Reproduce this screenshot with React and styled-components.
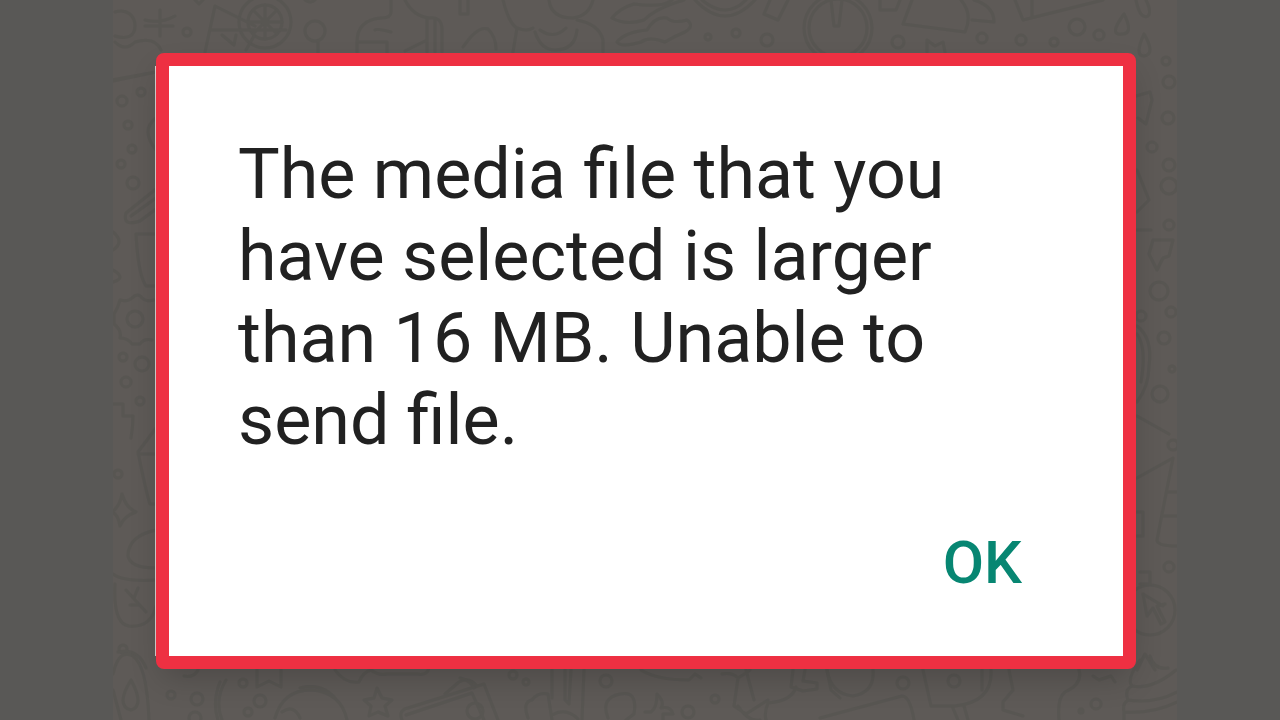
import React from "react"
import styled, { createGlobalStyle } from "styled-components"

const GlobalStyle = createGlobalStyle`
  body {
    margin: 0;
    background-color: #595856;
    font-family: Roboto, "Liberation Sans", sans-serif;
  }
`

const Page = styled.div`
  box-sizing: border-box;
  display: flex;
  min-height: 100vh;
  padding: 0 103px 0 113px;
  background-color: #595856;
`

const ChatBackground = styled.main`
  position: relative;
  box-sizing: border-box;
  flex: 1;
  display: flex;
  align-items: center;
  padding: 53px 41px 51px 43px;
  overflow: hidden;
  background-color: #5e5a57;
`

const Doodles = styled.svg`
  position: absolute;
  top: 0;
  left: 0;
  width: 100%;
  height: 100%;
  fill: none;
  stroke: #53534f;
  stroke-width: 3;
  stroke-linecap: round;
  stroke-linejoin: round;
  opacity: .5;
`

/* second shadow is the thin light edge left of the frame */
const Dialog = styled.section`
  position: relative;
  box-sizing: border-box;
  flex: 1;
  display: flex;
  flex-direction: column;
  padding: 67px 67px 58px 69px;
  border: 13px solid #ee3042;
  border-radius: 8px;
  background:
    linear-gradient(#fff, #fff) padding-box,
    #ee3042 border-box;
  box-shadow:
    0 14px 32px -6px rgba(0, 0, 0, .2),
    -14px 0 0 -13px #d8d2cf;
`

const Message = styled.p`
  margin: 0;
  font-size: 70px;
  line-height: 82px;
  color: #212121;
`

const Actions = styled.div`
  display: flex;
  justify-content: flex-end;
  margin-top: 66px;
`

const TextButton = styled.button`
  padding: 0 34px;
  border: none;
  background: none;
  font-family: inherit;
  font-size: 60px;
  font-weight: 500;
  line-height: 71px;
  color: #078672;
  cursor: pointer;
`

const circles = [
  [187, 32, 4], [265, 22, 17], [265, 22, 26], [265, 22, 3], [315, 31, 10],
  [708, 37, 3], [736, 33, 4], [767, 40, 6], [838, 28, 34], [838, 28, 29],
  [898, 42, 6], [982, 38, 5], [1021, 40, 5], [1054, 42, 4], [1077, 27, 8],
  [1099, 35, 5], [122, 101, 5], [141, 92, 4], [128, 125, 4], [132, 149, 4],
  [121, 164, 4], [133, 183, 6], [135, 319, 8], [123, 357, 4], [142, 364, 7],
  [126, 382, 5], [140, 401, 4], [118, 474, 4], [123, 649, 4],
  [1166, 61, 4], [1169, 82, 6], [1168, 118, 6], [1152, 147, 5], [1169, 165, 6],
  [1169, 186, 8], [1169, 225, 5], [1159, 291, 9], [1141, 316, 5], [1171, 312, 5],
  [1164, 338, 6], [1160, 394, 8], [1173, 445, 5], [1172, 369, 3], [1169, 567, 5],
  [1150, 610, 25], [171, 695, 4], [197, 699, 6], [243, 683, 4], [260, 701, 6],
  [248, 712, 4], [195, 718, 6], [606, 681, 6], [475, 711, 8], [715, 699, 4],
  [688, 712, 6], [903, 683, 6], [954, 681, 6], [1096, 704, 5], [1081, 711, 2],
  [513, 675, 4], [526, 682, 3],
]

const strokes = [
  // top edge
  "M115 12c12-4 20 4 20 14s-8 14-20 10M115 42q10 10 20 0 20-6 26 8",
  "M160 10v26M145 20q15 4 30-4M145 26h28",
  "M215 6l-10 46M215 6l40 20M210 30h76M222 35l12 10 2-10M265 5v34M248 22h34M253 10l24 24M253 34l24-24M246 50l8-14",
  "M318 41v12M195 0l4 4 4-4M305 0q6 4 10 0",
  "M357 52v-10q0-22 24-24 10 0 10-6V0M391 32q-14-4-16-2M357 42h30v11",
  "M405 0q8 16 24 18 13-2 13 12v22M427 19v33M435 19v33M427 40l-22 11",
  "M460 0v14h8V0M463 47q15-22 25-18 8 8 8 20",
  "M503 0q6 24 14 28l-4 24M517 28q10 4 16 0M549 0q2 18 24 18 16-2 20-18M577 20q22 4 26 20v12M540 30q14 10 26-2M535 32q6 18 20 18 20 0 22-20",
  "M612 18q8-10 22-14 28 4 38-4M612 18q14 8 32 2 12-12 40-20",
  "M617 42q8-10 30-12 8-14 20-12 6 6 20 2 8 6-2 12-10 4-20 10-16-6-24 0-20 6-24 0z",
  "M695 0q30 32 60 0M702 0q24 20 44 0M770 0l-6 14 14 6 10-20",
  "M831 0l3 26h5l3-26M880 0v10h16l4-10",
  "M912 0l-9 24 62 8q8-18-4-32M974 0q20 6 20 22l-22-2",
  "M1015 0l8 20 80-20M1032 16V0M927 52V40l8 6 8-4 2 10",
  "M1124 14q-16 22-2 20 12 0 2-20M1136 0q4 20 12 16 4-4-2-16M1144 34q-10 22 0 22 12-2 0-22",
  // left edge
  "M100 82l56-10M113 81l43-9M156 118q-16 12 0 32",
  "M126 213l30-24M126 213q-4 14 14 8l16-12M131 216l25-18",
  "M156 234h-20q2 40 10 52h10M113 232q12 10 0 18M113 270q14 8 0 12",
  "M120 300q8 2 12-2 6-6 10 0 4 4 12 2M120 300q-2 8-6 14v10q8 6 6 14 8 0 12 6h8q4-6 12-4",
  "M113 404h10v12h10q0 10-2 22M156 428l-18 24q8 40 12 52h6M138 454h18",
  "M122 494q4 14 14 18-12 4-16 14-2-12-8-14 8-6 10-18",
  "M156 530q-28 6-28 26 2 12 28 12M113 574q10 8 43 6M115 584q-2 40 14 42 22 2 27-20M126 590l20 22M134 598l4-10M140 605h-10",
  "M118 652q20-4 28 16",
  // right edge
  "M1136 96l14-4 2 8-6 24-8-6M1137 170l12 30-12 12M1137 230h14M1153 240h20l-4 16-6 2-6 12-8-16z",
  "M1137 326q16 12 12 40 0 20-12 36M1137 334q10 14 4 48",
  "M1137 416l32 18M1137 478l36-20-16 82q0 6 20 6M1168 492h9M1164 516h13M1137 512h6v24h-6",
  "M1143 594l4 22M1143 594l20 12M1147 616l6-8 8 16 4-2-8-16 8-2",
  "M1137 670l8-16 10 16M1140 572h10v12h-10",
  // bottom edge
  "M113 674q6-26 20-18 14 10 16 64M113 690l8 30M131 680q-16 26 0 30 14-4 0-30",
  "M226 680q-12 20-4 40M220 682q-8 20-2 38M184 676q10 2 14-6",
  "M257 670v17l12-6 12 6v-17M335 670q10 14 24 12 4-10 12-12 8 6 16 4h30q10 2 12-6",
  "M275 718q8-28 36-28 30 2 36 30M282 712q12-8 18 6M300 688q24-6 38 14",
  "M377 688l5 10 10 2-7 6 3 10-10-4-9 4 2-10-7-6 10-2z",
  "M402 720q-4-10 6-12l76-24 14 36M406 715l66-22 12 27M445 694l14-12q10-6 18 4",
  "M460 678q10 2 14 10M552 670v28M565 670v30l4 4 2-34M584 670l-2 50M532 700q-10 2-4 18M532 700q6-8 16-6l4 26M552 715q14-8 26 4",
  "M620 694q18-4 14 20l-8 6M620 694q-20 4-12 24M657 694q0 14-6 18h-6M657 694q8 8 4 14 10-2 12 6h-10v6M641 670q16 10 48 10l6-6 6 4",
  "M722 674q10-2 16 4 10-6 12-8M738 678l-4 28 12 8 22-14M746 670l8 30M768 703q-4 10-2 17M768 703q24-2 28-16M793 670l-2 17 12 4 14-2v-6l-14-2 2-11M738 706q10 16 22 14M827 670l4 20 9 8",
  "M827 670q4 24 26 26 22-4 20-26M820 718l82-22q8 0 12 24M923 670l8 36h24q38-4 36-36M982 670v20M952 706l6 14M964 706l4 14",
  "M1009 670l4 20-10 12v8l20 6M1079 670q4 14-14 22-8 6-6 28M1093 676l6 4 12-4 4 6",
  "M1140 660q-14 20-8 26 20 4 44-16M1132 686q-8 4-4 14 26 4 49-8M1128 700q-6 4-4 12 28 2 53-10M1124 712v8M1150 656q4 14 18 12",
]

function Wallpaper() {
  return (
    <Doodles viewBox="113 0 1064 720" preserveAspectRatio="xMidYMid slice" aria-hidden="true">
      {circles.map(([cx, cy, r]) => (
        <circle key={`${cx}-${cy}-${r}`} cx={cx} cy={cy} r={r} />
      ))}
      {strokes.map((d) => (
        <path key={d} d={d} />
      ))}
    </Doodles>
  )
}

export default function App() {
  return (
    <>
      <GlobalStyle />
      <Page>
        <ChatBackground>
          <Wallpaper />
          <Dialog role="alertdialog" aria-describedby="dialog-message">
            <Message id="dialog-message">
              The media file that you have selected is larger than 16 MB. Unable to send file.
            </Message>
            <Actions>
              <TextButton type="button">OK</TextButton>
            </Actions>
          </Dialog>
        </ChatBackground>
      </Page>
    </>
  )
}
